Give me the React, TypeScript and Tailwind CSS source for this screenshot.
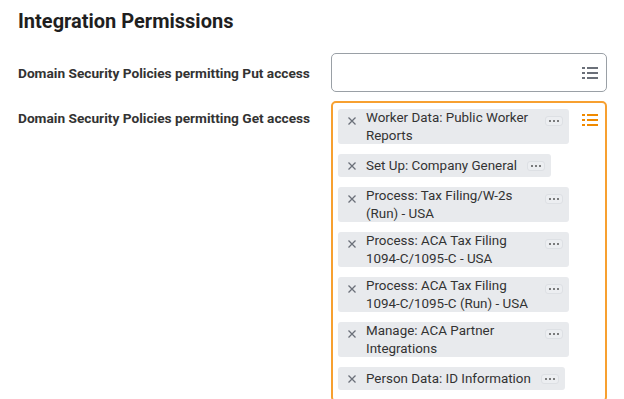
import React from "react";

const chips = [
  "Worker Data: Public Worker Reports",
  "Set Up: Company General",
  "Process: Tax Filing/W-2s (Run) - USA",
  "Process: ACA Tax Filing 1094-C/1095-C - USA",
  "Process: ACA Tax Filing 1094-C/1095-C (Run) - USA",
  "Manage: ACA Partner Integrations",
  "Person Data: ID Information",
];

const ListIcon = ({ color }: { color: string }) => (
  <svg width="16" height="12" viewBox="0 0 16 12" fill={color}>
    <rect x="0" y="0" width="3" height="2" />
    <rect x="5" y="0" width="11" height="2" />
    <rect x="0" y="5" width="3" height="2" />
    <rect x="5" y="5" width="11" height="2" />
    <rect x="0" y="10" width="3" height="2" />
    <rect x="5" y="10" width="11" height="2" />
  </svg>
);

const Chip = ({ label }: { label: string }) => (
  <div className="flex items-start max-w-[231px] w-fit min-h-[23px] bg-[#e8eaed] rounded-[3px] pl-[10px] pr-[6px]">
    <svg
      width="8"
      height="8"
      viewBox="0 0 8 8"
      className="mt-[8px] shrink-0"
      stroke="#6b7079"
      strokeWidth="1.3">
      <path d="M0.5 0.5 L7.5 7.5 M7.5 0.5 L0.5 7.5" />
    </svg>
    <p className="ml-[10px] self-center text-[13.4px] leading-[17.5px] text-[#333]">{label}</p>
    <div className="ml-[10px] mt-[7px] shrink-0 flex items-center justify-center gap-[2px] w-[18px] h-[10px] rounded-[3px] border border-[#dde0e4] bg-[#eceef1]">
      <span className="w-[2px] h-[2px] rounded-full bg-[#555]" />
      <span className="w-[2px] h-[2px] rounded-full bg-[#555]" />
      <span className="w-[2px] h-[2px] rounded-full bg-[#555]" />
    </div>
  </div>
);

export default function App() {
  return (
    <div className="w-[624px] h-[399px] overflow-hidden bg-white font-['Roboto',sans-serif] text-[#333] pl-[18px] pt-[9px]">
      <h1 className="text-[20px] font-bold leading-[24px] text-[#1f1f1f]">
        Integration Permissions
      </h1>
      <div className="mt-[20px] flex items-center">
        <div className="w-[313px] text-[13.7px] font-bold leading-[16px]">
          Domain Security Policies permitting Put access
        </div>
        <div className="w-[276px] h-[39px] border border-[#9aa0a6] rounded-[5px] flex items-center justify-end pr-[8px]">
          <ListIcon color="#6b7079" />
        </div>
      </div>
      <div className="mt-[9px] flex items-start">
        <div className="w-[313px] text-[13.7px] font-bold leading-[16px] mt-[9px]">
          Domain Security Policies permitting Get access
        </div>
        <div className="w-[276px] border-2 border-[#f7a030] rounded-[5px] flex items-start justify-between pl-[5px] pr-[7px] pt-[6px] pb-[10px]">
          <div className="flex flex-col gap-[10px]">
            {chips.map((c, i) => (
              <Chip key={i} label={c} />
            ))}
          </div>
          <div className="mt-[5px]">
            <ListIcon color="#f08a00" />
          </div>
        </div>
      </div>
    </div>
  );
}
